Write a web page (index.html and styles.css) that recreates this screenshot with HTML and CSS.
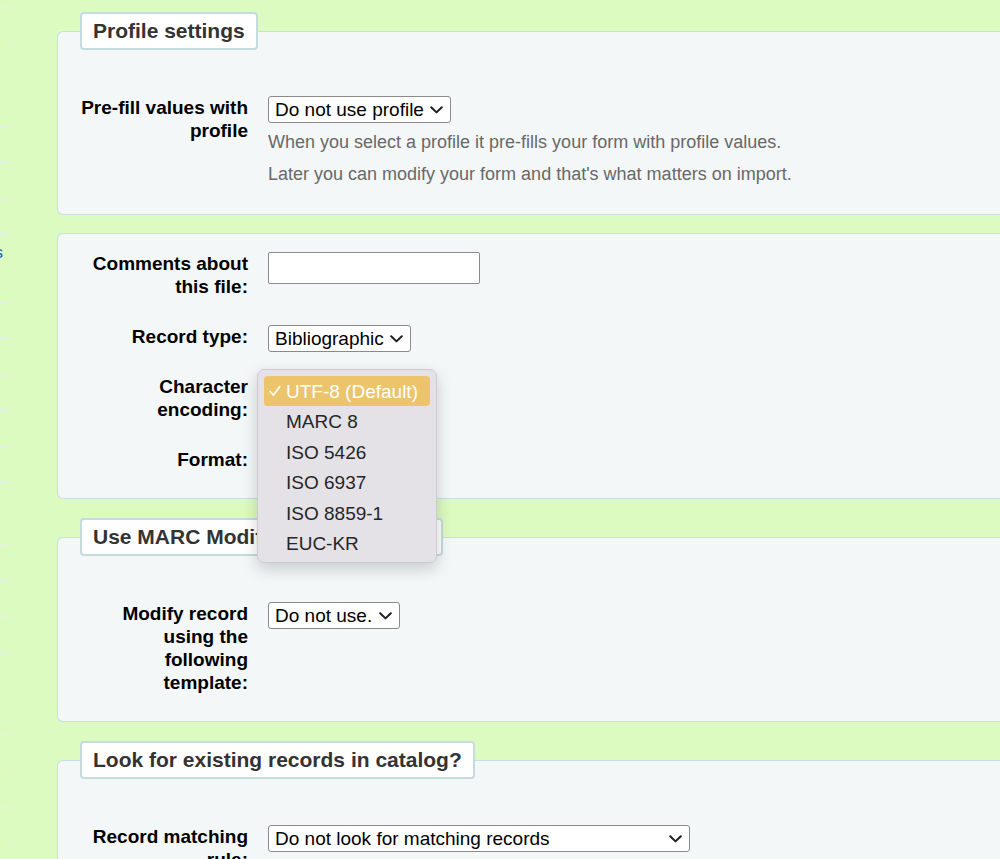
FILE: index.html
```html
<!DOCTYPE html>
<html lang="en">
<head>
  <meta charset="UTF-8">
  <meta name="viewport" content="width=device-width, initial-scale=1.0">
  <title>Stage records for import</title>
  <link rel="stylesheet" href="styles.css">
</head>
<body>
  <div class="page">
    <nav class="sidebar">
      <ul>
        <li class="first"></li>
        <li></li>
        <li class="head"></li>
        <li></li>
        <li></li>
        <li></li>
        <li class="wrap"><a href="#">Stage records</a></li>
        <li></li>
        <li></li>
        <li></li>
        <li></li>
        <li></li>
        <li class="wrap"></li>
        <li></li>
        <li></li>
        <li></li>
        <li class="head"></li>
        <li></li>
        <li></li>
        <li></li>
      </ul>
    </nav>

    <main class="content">
      <div class="panel">
        <h2 class="legend">Profile settings</h2>
        <div class="row">
          <label class="row-label" for="profile">Pre-fill values with profile</label>
          <div class="field">
            <span class="select">
              <select id="profile"><option>Do not use profile</option></select>
              <svg class="chev" viewBox="0 0 13 8"><path d="M1.2 1.2 L6.5 6.4 L11.8 1.2"/></svg>
            </span>
            <p class="hint">When you select a profile it pre-fills your form with profile values.</p>
            <p class="hint">Later you can modify your form and that's what matters on import.</p>
          </div>
        </div>
      </div>

      <div class="panel">
        <div class="row">
          <label class="row-label" for="comments">Comments about this file:</label>
          <div class="field">
            <input type="text" class="text-input" id="comments">
          </div>
        </div>
        <div class="row">
          <label class="row-label" for="record-type">Record type:</label>
          <div class="field">
            <span class="select">
              <select id="record-type"><option>Bibliographic</option></select>
              <svg class="chev" viewBox="0 0 13 8"><path d="M1.2 1.2 L6.5 6.4 L11.8 1.2"/></svg>
            </span>
          </div>
        </div>
        <div class="row">
          <label class="row-label" for="encoding">Character encoding:</label>
          <div class="field open">
            <span class="select">
              <select id="encoding"><option>UTF-8 (Default)</option></select>
              <svg class="chev" viewBox="0 0 13 8"><path d="M1.2 1.2 L6.5 6.4 L11.8 1.2"/></svg>
            </span>
            <ul class="menu">
              <li class="menu-item selected">
                <svg class="check" viewBox="0 0 12 12"><path d="M1.2 6.6 L4.4 10.2 L10.8 1.6"/></svg>UTF-8 (Default)
              </li>
              <li class="menu-item">MARC 8</li>
              <li class="menu-item">ISO 5426</li>
              <li class="menu-item">ISO 6937</li>
              <li class="menu-item">ISO 8859-1</li>
              <li class="menu-item">EUC-KR</li>
            </ul>
          </div>
        </div>
        <div class="row">
          <label class="row-label" for="format">Format:</label>
          <div class="field">
            <span class="select">
              <select id="format"><option>MARC</option></select>
              <svg class="chev" viewBox="0 0 13 8"><path d="M1.2 1.2 L6.5 6.4 L11.8 1.2"/></svg>
            </span>
          </div>
        </div>
      </div>

      <div class="panel titled">
        <h2 class="legend wide-title">Use MARC Modification Template</h2>
        <div class="row">
          <label class="row-label" for="template">Modify record using the following template:</label>
          <div class="field">
            <span class="select">
              <select id="template"><option>Do not use.</option></select>
              <svg class="chev" viewBox="0 0 13 8"><path d="M1.2 1.2 L6.5 6.4 L11.8 1.2"/></svg>
            </span>
          </div>
        </div>
      </div>

      <div class="panel titled">
        <h2 class="legend">Look for existing records in catalog?</h2>
        <div class="row">
          <label class="row-label" for="matcher">Record matching rule:</label>
          <div class="field">
            <span class="select">
              <select id="matcher" class="wide"><option>Do not look for matching records</option></select>
              <svg class="chev" viewBox="0 0 13 8"><path d="M1.2 1.2 L6.5 6.4 L11.8 1.2"/></svg>
            </span>
          </div>
        </div>
        <div class="row">
          <label class="row-label">Action if matching record found:</label>
          <div class="field"></div>
        </div>
      </div>
    </main>
  </div>
</body>
</html>
```

FILE: styles.css
```css
body {
  margin: 0;
  background: #dcfbc0;
  font-family: "Liberation Sans", Arial, sans-serif;
  color: #000;
  overflow: hidden;
}
.page {
  display: flex;
  align-items: flex-start;
}

/* left navigation, mostly scrolled out of view */
.sidebar {
  width: 11px;
  flex: none;
  overflow: hidden;
}
.sidebar ul {
  list-style: none;
  margin: 0;
  padding: 0;
}
.sidebar li {
  height: 35px;
  border-bottom: 1px solid #eaf1e4;
  white-space: nowrap;
}
.sidebar li.first {
  height: 7px;
}
.sidebar li.head {
  height: 82px;
}
.sidebar li.wrap {
  height: 61px;
}
.sidebar a {
  display: block;
  margin: 6px 0 0 -107px;
  width: 110px;
  text-align: right;
  font-size: 17px;
  line-height: 23px;
  color: #1c5bb8;
  text-decoration: none;
}

.content {
  margin-left: 46px;
  padding-top: 31px;
  width: 1100px;
  flex: none;
  display: flex;
  flex-direction: column;
  gap: 18px;
}
.panel {
  background: #f4f7f8;
  border: 1px solid #c9dee1;
  border-right: 0;
  border-radius: 6px 0 0 6px;
  padding: 18px 0 0 20px;
}
.panel.titled {
  margin-top: 20px;
}
.legend {
  display: block;
  width: fit-content;
  box-sizing: border-box;
  height: 38px;
  margin: -38px 0 46px 2px;
  padding: 0 11px;
  background: #fff;
  border: 2px solid #c4dcde;
  border-radius: 4px;
  font-size: 21px;
  line-height: 34px;
  font-weight: bold;
  color: #333;
}
.legend.wide-title {
  padding-right: 15px;
}

.row {
  display: flex;
  align-items: flex-start;
  gap: 20px;
  margin-bottom: 27px;
}
.row-label {
  width: 170px;
  flex: none;
  text-align: right;
  font-size: 19px;
  line-height: 23px;
  font-weight: bold;
}
.field {
  display: flex;
  flex-direction: column;
  align-items: flex-start;
  position: relative;
}

.select {
  position: relative;
  display: inline-block;
  margin-bottom: -4px;
}
.select select {
  appearance: none;
  -webkit-appearance: none;
  display: block;
  height: 27px;
  margin: 0;
  padding: 0 26px 0 6px;
  border: 1px solid #8a8a8a;
  border-radius: 3px;
  background: #fff;
  font-family: "Liberation Sans", Arial, sans-serif;
  font-size: 19px;
  color: #000;
}
.select select.wide {
  width: 422px;
}
.chev {
  position: absolute;
  right: 8px;
  top: 10px;
  width: 13px;
  height: 8px;
  pointer-events: none;
}
.chev path {
  fill: none;
  stroke: #1e1e1e;
  stroke-width: 2;
  stroke-linecap: round;
  stroke-linejoin: round;
}

.text-input {
  width: 212px;
  height: 32px;
  box-sizing: border-box;
  margin: 0;
  border: 1px solid #8a8a8a;
  border-radius: 2px;
  background: #fff;
  font-size: 19px;
}

.hint {
  margin: 10px 0 0;
  font-size: 18px;
  line-height: 22px;
  color: #686868;
}
.hint:first-of-type {
  margin-top: 12px;
}
.hint:last-child {
  margin-bottom: 2px;
}

/* open native select popup */
.menu {
  position: absolute;
  left: -11px;
  top: -6px;
  z-index: 10;
  width: 180px;
  box-sizing: border-box;
  margin: 0;
  padding: 6px 6px 4px;
  list-style: none;
  background: #e4e2e6;
  border: 1px solid #cdcbcf;
  border-radius: 7px;
  box-shadow: 0 6px 16px rgba(0, 0, 0, 0.18);
}
.menu-item {
  position: relative;
  height: 30.4px;
  padding-left: 22px;
  font-size: 19px;
  line-height: 31px;
  color: #262626;
  white-space: nowrap;
}
.menu-item.selected {
  height: 30px;
  margin-bottom: 0.4px;
  background: #ebc46b;
  border-radius: 4px;
  color: #fff;
}
.check {
  position: absolute;
  left: 5px;
  top: 9px;
  width: 12px;
  height: 12px;
}
.check path {
  fill: none;
  stroke: #fff;
  stroke-width: 1.6;
  stroke-linecap: round;
  stroke-linejoin: round;
}
```
